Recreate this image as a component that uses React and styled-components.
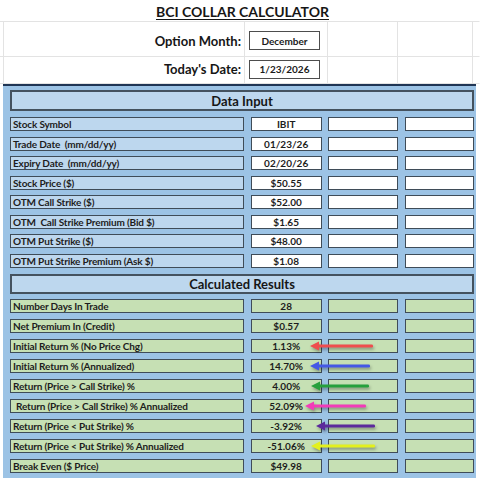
import React from "react";
import styled, { createGlobalStyle } from "styled-components";

const Global = createGlobalStyle`
  html, body { margin: 0; padding: 0; background: #ffffff; }
  body { font-family: Lato, "Liberation Sans", Arial, sans-serif; color: #1b1b1b; }
  #root { width: 480px; height: 478px; overflow: hidden; }
`;

const Page = styled.div`
  width: 480px;
  height: 478px;
  display: flex;
  flex-direction: column;
  background: #ffffff;
`;

const Top = styled.div`
  display: grid;
  grid-template-columns: 4px 241px 83px 70px 75px 7px;
  grid-template-rows: 22px 35px 27px;
  flex: none;
`;

const Cell = styled.div`
  border-right: 1px solid ${(p) => (p.$noRight ? "transparent" : "#e3e3e3")};
  border-bottom: 1px solid #e3e3e3;
  display: flex;
  align-items: center;
  justify-content: ${(p) => p.$justify || "flex-start"};
  padding-right: ${(p) => p.$pr || 0}px;
  padding-left: ${(p) => p.$pl || 0}px;
  grid-column: ${(p) => p.$span || "auto"};
  box-sizing: border-box;
`;

const Title = styled.div`
  font-size: 14px;
  font-weight: 700;
  text-decoration: underline;
  text-underline-offset: 2px;
  margin-left: 6px;
  margin-top: 2px;
  color: #161616;
`;

const FieldLabel = styled.div`
  font-size: 13px;
  font-weight: 700;
  color: #161616;
  margin-top: ${(p) => p.$mt || 0}px;
`;

const FieldBox = styled.div`
  width: 71px;
  height: 19px;
  box-sizing: border-box;
  border: 1.5px solid #4d4d4d;
  display: flex;
  align-items: center;
  justify-content: center;
  font-size: 10px;
  font-weight: 700;
  color: #1b1b1b;
  margin-left: 4px;
  margin-top: ${(p) => p.$mt || 0}px;
`;

const Panel = styled.div`
  flex: 1;
  margin-left: 3px;
  width: 473px;
  background: #9cc3e5;
  border-top: 2px solid #1f3554;
  box-sizing: border-box;
  padding: 4px 0 0 7px;
  display: flex;
  flex-direction: column;
`;

const Header = styled.div`
  width: 464px;
  height: ${(p) => p.$h}px;
  box-sizing: border-box;
  background: #bdd7ee;
  border: 2px solid #44525f;
  display: flex;
  align-items: center;
  justify-content: center;
  font-size: 13px;
  font-weight: 700;
  color: #161616;
  margin-top: ${(p) => p.$mt || 0}px;
`;

const Rows = styled.div`
  display: flex;
  flex-direction: column;
  gap: ${(p) => p.$gap}px;
  margin-top: ${(p) => p.$mt}px;
`;

const Row = styled.div`
  position: relative;
  display: grid;
  grid-template-columns: 234px 71px 70px 69px;
  column-gap: 6.67px;
  height: 14px;
`;

const Box = styled.div`
  box-sizing: border-box;
  height: 14px;
  border: 1.5px solid #3f4c58;
  background: ${(p) => p.$bg};
  display: flex;
  align-items: center;
  justify-content: ${(p) => (p.$left ? "flex-start" : "center")};
  padding-left: ${(p) => (p.$left ? p.$indent || 2 : 0)}px;
  font-size: 10px;
  font-weight: 700;
  color: #1d1d1d;
  white-space: pre;
  letter-spacing: ${(p) => (p.$left ? "-0.15px" : "0")};
  overflow: visible;
`;

const ArrowSvg = styled.svg`
  position: absolute;
  top: -5px;
  left: ${(p) => p.$left}px;
  overflow: visible;
  z-index: 2;
  filter: drop-shadow(1px 2px 1.5px rgba(0, 0, 0, 0.35));
  pointer-events: none;
`;

const Arrow = ({ left, length, color }) => (
  <ArrowSvg $left={left} width={length} height="24" viewBox={`0 0 ${length} 24`}>
    <rect x="7" y="10.5" width={length - 7} height="3" rx="1.2" fill={color} />
    <polygon points="0,12 9,7.5 9,16.5" fill={color} />
  </ArrowSvg>
);

const LABEL_BG = "#bdd7ee";
const GREEN = "#c6e0b4";

const dataRows = [
  ["Stock Symbol", "IBIT"],
  ["Trade Date  (mm/dd/yy)", "01/23/26"],
  ["Expiry Date  (mm/dd/yy)", "02/20/26"],
  ["Stock Price ($)", "$50.55"],
  ["OTM Call Strike ($)", "$52.00"],
  ["OTM  Call Strike Premium (Bid $)", "$1.65"],
  ["OTM Put Strike ($)", "$48.00"],
  ["OTM Put Strike Premium (Ask $)", "$1.08"],
];

const resultRows = [
  { label: "Number Days In Trade", value: "28" },
  { label: "Net Premium In (Credit)", value: "$0.57" },
  { label: "Initial Return % (No Price Chg)", value: "1.13%", arrow: { left: 300, length: 63, color: "#ef4d4d" } },
  { label: "Initial Return % (Annualized)", value: "14.70%", arrow: { left: 300, length: 60, color: "#4458e6" } },
  { label: "Return (Price > Call Strike) %", value: "4.00%", arrow: { left: 301, length: 58, color: "#26a03c" } },
  { label: "Return (Price > Call Strike) % Annualized", value: "52.09%", indent: 5, arrow: { left: 295, length: 61, color: "#f23bb8" } },
  { label: "Return (Price < Put Strike) %", value: "-3.92%", arrow: { left: 306, length: 59, color: "#5b2a9c" } },
  { label: "Return (Price < Put Strike) % Annualized", value: "-51.06%", arrow: { left: 301, length: 64, color: "#e3f01c" } },
  { label: "Break Even ($ Price)", value: "$49.98" },
];

export default function App() {
  return (
    <Page>
      <Global />
      <Top>
        <Cell $span="1 / span 6" $justify="center" $noRight>
          <Title>BCI COLLAR CALCULATOR</Title>
        </Cell>
        <Cell />
        <Cell $justify="flex-end" $pr={3}>
          <FieldLabel $mt={3}>Option Month:</FieldLabel>
        </Cell>
        <Cell>
          <FieldBox $mt={3}>December</FieldBox>
        </Cell>
        <Cell />
        <Cell />
        <Cell $noRight />
        <Cell />
        <Cell $justify="flex-end" $pr={3}>
          <FieldLabel $mt={-2}>Today's Date:</FieldLabel>
        </Cell>
        <Cell>
          <FieldBox $mt={-2}>1/23/2026</FieldBox>
        </Cell>
        <Cell />
        <Cell />
        <Cell $noRight />
      </Top>
      <Panel>
        <Header $h={21}>Data Input</Header>
        <Rows $gap={5.57} $mt={6}>
          {dataRows.map(([label, value]) => (
            <Row key={label}>
              <Box $bg={LABEL_BG} $left>{label}</Box>
              <Box $bg="#ffffff">{value}</Box>
              <Box $bg="#ffffff" />
              <Box $bg="#ffffff" />
            </Row>
          ))}
        </Rows>
        <Header $h={20} $mt={6}>Calculated Results</Header>
        <Rows $gap={6} $mt={5}>
          {resultRows.map((r) => (
            <Row key={r.label}>
              <Box $bg={GREEN} $left $indent={r.indent}>{r.label}</Box>
              <Box $bg={GREEN}>{r.value}</Box>
              <Box $bg={GREEN} />
              <Box $bg={GREEN} />
              {r.arrow && <Arrow {...r.arrow} />}
            </Row>
          ))}
        </Rows>
      </Panel>
    </Page>
  );
}
